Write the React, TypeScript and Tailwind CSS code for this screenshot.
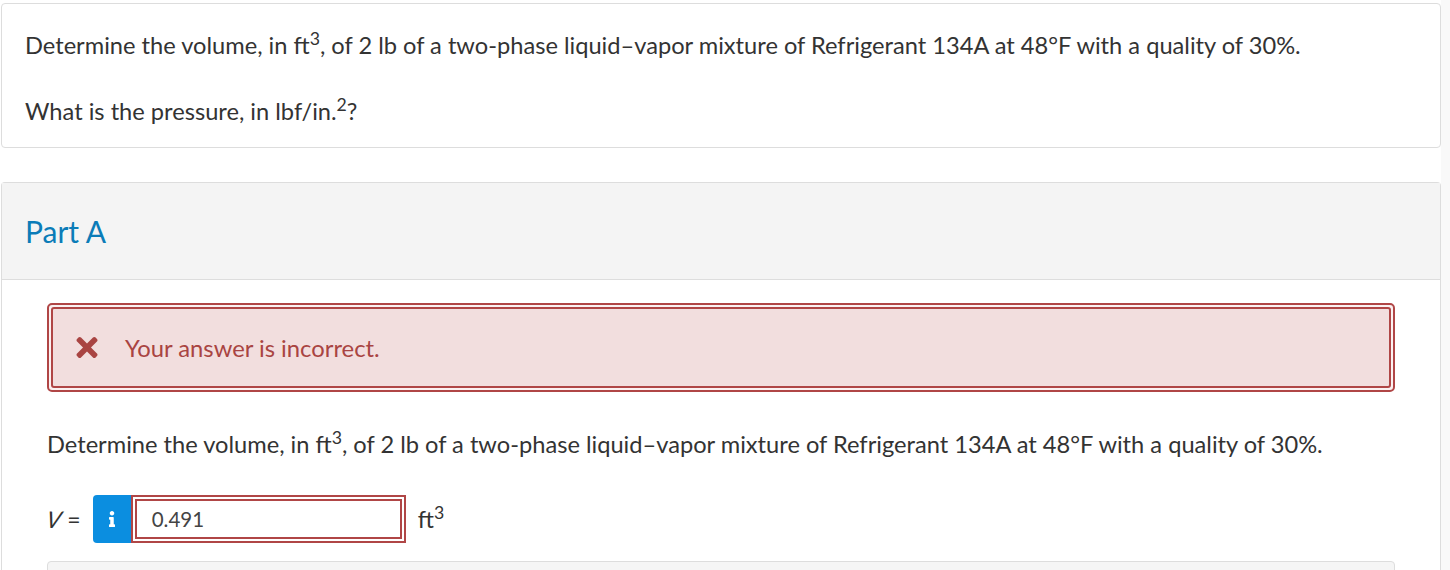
import React from "react";

function XIcon() {
  return (
    <svg width="22" height="21" viewBox="0 80 352 352" fill="#a94442" aria-hidden="true">
      <path d="M242.72 256l100.07-100.07c12.28-12.28 12.28-32.19 0-44.48l-22.24-22.24c-12.28-12.28-32.19-12.28-44.48 0L176 189.28 75.930 89.21c-12.28-12.28-32.19-12.28-44.48 0L9.21 111.45c-12.28 12.28-12.28 32.19 0 44.48L109.28 256 9.21 356.07c-12.28 12.28-12.28 32.19 0 44.48l22.24 22.24c12.28 12.28 32.2 12.28 44.48 0L176 322.72l100.070 100.07c12.28 12.28 32.2 12.28 44.48 0l22.24-22.240c12.28-12.28 12.28-32.19 0-44.48L242.72 256z" />
    </svg>
  );
}

function InfoIcon() {
  return (
    <svg width="6" height="16" viewBox="0 0 192 512" fill="#ffffff" aria-hidden="true">
      <path d="M20 424.229h20V279.771H20c-11.046 0-20-8.954-20-20V212c0-11.046 8.954-20 20-20h112c11.046 0 20 8.954 20 20v212.229h20c11.046 0 20 8.954 20 20V492c0 11.046-8.954 20-20 20H20c-11.046 0-20-8.954-20-20v-47.771c0-11.046 8.954-20 20-20zM96 0C56.235 0 24 32.235 24 72s32.235 72 72 72 72-32.235 72-72S135.764 0 96 0z" />
    </svg>
  );
}

const question = (
  <>
    Determine the volume, in ft<sup>3</sup>, of 2 lb of a two-phase liquid–vapor mixture of Refrigerant 134A at 48°F with a quality of 30%.
  </>
);

export default function App() {
  return (
    <div
      className="min-h-screen bg-[#f9f9f9] text-[#333333]"
      style={{ fontFamily: "Lato, 'Noto Sans', sans-serif" }}
    >
      <div className="w-[1441px] bg-white pl-px pt-[3px] min-h-screen">
        {/* Intro card */}
        <div className="w-[1440px] rounded-[4px] border border-[#dddddd] bg-white px-[23px] pt-[26px] pb-[21px] text-[23.65px] leading-[30px]">
          <p>{question}</p>
          <p className="mt-[36px]">
            What is the pressure, in lbf/in.<sup>2</sup>?
          </p>
        </div>

        {/* Part A card */}
        <div className="mt-[34px] w-[1440px] rounded-t-[4px] border border-b-0 border-[#dddddd] bg-white">
          <div className="border-b border-[#dddddd] bg-[#f4f4f4] px-[23px] py-[30px]">
            <h2 className="text-[30px] leading-[36px] text-[#0b7cb8]">Part A</h2>
          </div>
          <div className="px-[45px] pt-[23px] pb-[40px]">
            {/* Error box */}
            <div className="rounded-[5px] border-2 border-[#b04646] bg-[#fbf1f1] p-[2px]">
              <div className="flex h-[81px] items-center rounded-[3px] border-2 border-[#b04646] bg-[#f2dede] pl-[23px]">
                <XIcon />
                <span className="ml-[27px] text-[23.8px] leading-[30px] text-[#a94442]">
                  Your answer is incorrect.
                </span>
              </div>
            </div>

            <p className="mt-[37px] text-[23.65px] leading-[30px]">{question}</p>

            {/* Answer row */}
            <div className="mt-[36px] flex h-[48px] items-center">
              <span className="text-[23px] leading-[30px]">
                <span className="inline-block -skew-x-12 italic">V</span> =
              </span>
              <div className="ml-[12px] flex h-[48px] w-[38px] items-center justify-center rounded-l-[4px] bg-[#0b8ee0]">
                <InfoIcon />
              </div>
              <div className="h-[48px] w-[275px] border-2 border-[#b04646] bg-white p-[2px]">
                <div className="flex h-full items-center border-2 border-[#b04646] pl-[15px] text-[20.5px] text-[#444444]">
                  0.491
                </div>
              </div>
              <span className="ml-[12px] text-[23.65px] leading-[30px]">
                ft<sup>3</sup>
              </span>
            </div>

            {/* Next section (cut off) */}
            <div className="mt-[18px] h-[60px] rounded-t-[4px] border border-[#dddddd] bg-[#f5f5f5]" />
          </div>
        </div>
      </div>
    </div>
  );
}
